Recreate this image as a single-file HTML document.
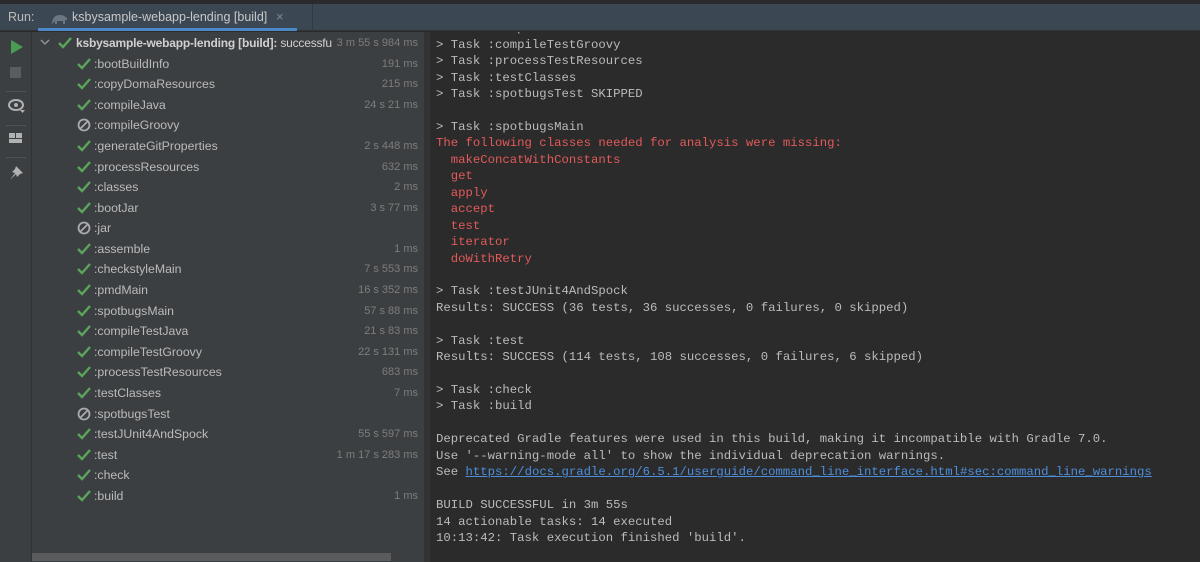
<!DOCTYPE html>
<html><head><meta charset="utf-8"><style>
*{margin:0;padding:0;box-sizing:border-box}
body{width:1200px;height:562px;overflow:hidden;background:#2b2b2b;position:relative;font-family:"Liberation Sans",sans-serif}
#top{position:absolute;left:0;top:0;width:1200px;height:4px;background:#2b2b2b}
#tabs{position:absolute;left:0;top:4px;width:1200px;height:27px;background:#3c4754;border-bottom:1px solid #323232}
#tabs .run{position:absolute;left:8px;top:6px;font-size:12.5px;color:#bbb}
#tabs .title{position:absolute;left:72px;top:6px;font-size:12.5px;color:#c8c8c8}
#tabs .x{position:absolute;left:276px;top:5px;font-size:13px;color:#888}
#tabs .ul{position:absolute;left:38px;top:24px;width:259px;height:3px;background:#4a88c7}
#tabs .sep{position:absolute;left:312px;top:0;width:1px;height:27px;background:#2f3a44}
#lbar{position:absolute;left:0;top:32px;width:32px;height:530px;background:#3c3f41;border-right:1px solid #323232}
#tree{position:absolute;left:32px;top:32px;width:392px;height:530px;background:#3c3f41}
#vs{position:absolute;left:424px;top:32px;width:6px;height:530px;background:#313335}
.r{position:absolute;left:0;width:392px;height:20px;font-size:12.3px;color:#bbb;line-height:20px}
.r .n{position:absolute;left:62px}
.r .t{position:absolute;right:6px;font-size:11px;color:#7d7d7d}
.r svg{position:absolute;left:45px;top:4px}
#hs{position:absolute;left:32px;top:553px;width:359px;height:8px;background:#595b5d}
#con{position:absolute;left:430px;top:32px;width:770px;height:530px;overflow:hidden;background:#2b2b2b}
pre{position:absolute;left:6px;top:-11.6px;font-family:"Liberation Mono",monospace;font-size:12.3px;line-height:16.44px;color:#bbb}
.e{color:#e25a5a}
a{color:#4d8fdc;text-decoration:underline}
</style></head><body>
<div id="top"></div>
<div id="tabs"><span class="run">Run:</span>
<svg style="position:absolute;left:51px;top:8px" width="17" height="13" viewBox="0 0 17 13"><path d="M1 12 C1 6 4 3 9 3 C12 3 14 4 15 6 L16 5 L16 8 L14 8 L14 12 L12 12 L12 9 L6 9 L6 12 L4 12 L4 9 Z" fill="#6b7682"/></svg>
<span class="title">ksbysample-webapp-lending [build]</span><span class="x">×</span><div class="ul"></div><div class="sep"></div></div>
<div id="lbar">
<svg style="position:absolute;left:11px;top:8px" width="12" height="14"><path d="M0 0 L12 7 L0 14Z" fill="#499c54"/></svg>
<div style="position:absolute;left:10px;top:35px;width:11px;height:11px;background:#5a5d5f"></div>
<div style="position:absolute;left:6px;top:59px;width:20px;height:1px;background:#515151"></div>
<svg style="position:absolute;left:8px;top:67px" width="18" height="14"><ellipse cx="8" cy="6" rx="7" ry="5" fill="none" stroke="#afb1b3" stroke-width="2"/><circle cx="8" cy="6" r="2" fill="#afb1b3"/><path d="M12 11 L17 11 L14.5 14Z" fill="#afb1b3"/></svg>
<div style="position:absolute;left:6px;top:93px;width:20px;height:1px;background:#515151"></div>
<div style="position:absolute;left:9px;top:101px;width:6px;height:5px;background:#afb1b3"></div><div style="position:absolute;left:16px;top:101px;width:6px;height:5px;background:#afb1b3"></div><div style="position:absolute;left:9px;top:107px;width:13px;height:4px;background:#afb1b3"></div>
<div style="position:absolute;left:6px;top:125px;width:20px;height:1px;background:#515151"></div>
<svg style="position:absolute;left:9px;top:134px" width="15" height="15"><path d="M8 1 L14 7 L11 8 L8 11 L7 8 L1 14 L6 7 L3 6 L6 3 L7 0Z" fill="#afb1b3"/></svg>
</div>
<div id="tree">
<div class="r" style="top:1px"><svg style="left:8px;top:6px" width="10" height="8"><path d="M1 1 L5 5 L9 1" fill="none" stroke="#999" stroke-width="1.3"/></svg><svg style="left:26px" width="14" height="12"><path d="M1 6 L5 10 L13 1" fill="none" stroke="#5aa55b" stroke-width="2.4"/></svg><span class="n" style="left:44px;color:#d0d0d0;font-weight:bold;font-size:12px;width:260px;overflow:hidden;white-space:nowrap;letter-spacing:-0.2px">ksbysample-webapp-lending [build]:<span style="font-weight:normal"> successfu</span></span><span class="t">3 m 55 s 984 ms</span></div>
</div>
<div id="vs"></div>
<div id="hs"></div>
<div id="con"><pre>&gt; Task :compileTestJava
&gt; Task :compileTestGroovy
&gt; Task :processTestResources
&gt; Task :testClasses
&gt; Task :spotbugsTest SKIPPED

&gt; Task :spotbugsMain
<span class="e">The following classes needed for analysis were missing:
  makeConcatWithConstants
  get
  apply
  accept
  test
  iterator
  doWithRetry</span>

&gt; Task :testJUnit4AndSpock
Results: SUCCESS (36 tests, 36 successes, 0 failures, 0 skipped)

&gt; Task :test
Results: SUCCESS (114 tests, 108 successes, 0 failures, 6 skipped)

&gt; Task :check
&gt; Task :build

Deprecated Gradle features were used in this build, making it incompatible with Gradle 7.0.
Use '--warning-mode all' to show the individual deprecation warnings.
See <a>https://docs.gradle.org/6.5.1/userguide/command_line_interface.html#sec:command_line_warnings</a>

BUILD SUCCESSFUL in 3m 55s
14 actionable tasks: 14 executed
10:13:42: Task execution finished 'build'.</pre></div>
<script>
var rows=[["bootBuildInfo","191 ms",1],["copyDomaResources","215 ms",1],["compileJava","24 s 21 ms",1],["compileGroovy","",0],["generateGitProperties","2 s 448 ms",1],["processResources","632 ms",1],["classes","2 ms",1],["bootJar","3 s 77 ms",1],["jar","",0],["assemble","1 ms",1],["checkstyleMain","7 s 553 ms",1],["pmdMain","16 s 352 ms",1],["spotbugsMain","57 s 88 ms",1],["compileTestJava","21 s 83 ms",1],["compileTestGroovy","22 s 131 ms",1],["processTestResources","683 ms",1],["testClasses","7 ms",1],["spotbugsTest","",0],["testJUnit4AndSpock","55 s 597 ms",1],["test","1 m 17 s 283 ms",1],["check","",1],["build","1 ms",1]];
var t=document.getElementById('tree'),h='';
rows.forEach(function(r,i){var top=1+(i+1)*20.59;
var ic=r[2]?'<svg width="14" height="12"><path d="M1 6 L5 10 L13 1" fill="none" stroke="#5aa55b" stroke-width="2.4"/></svg>':'<svg width="14" height="14" style="top:3px"><circle cx="7" cy="7" r="5.5" fill="none" stroke="#a9abad" stroke-width="1.8"/><path d="M3.5 10.5 L10.5 3.5" stroke="#a9abad" stroke-width="1.8"/></svg>';
h+='<div class="r" style="top:'+top+'px">'+ic+'<span class="n">:'+r[0]+'</span><span class="t">'+r[1]+'</span></div>';});
t.innerHTML+=h;
</script>
</body></html>
